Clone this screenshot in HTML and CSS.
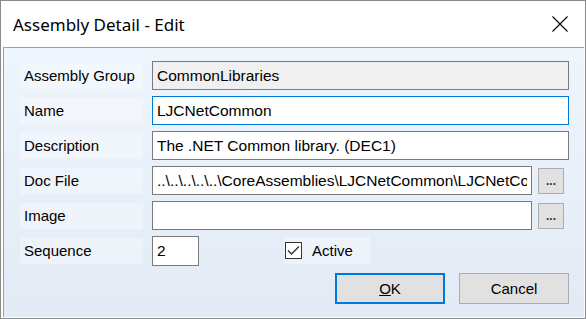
FILE: index.html
```html
<!DOCTYPE html>
<html lang="en">
<head>
  <meta charset="UTF-8" />
  <title>Assembly Detail - Edit</title>
  <link rel="stylesheet" href="styles.css">
</head>
<body>
  <div class="window">
    <div class="titlebar">
      <span class="title">Assembly Detail - Edit</span>
      <svg class="close" width="16" height="16" viewBox="0 0 16 16">
        <path d="M0.5 0.5 L15.5 15.5 M15.5 0.5 L0.5 15.5" stroke="#000" stroke-width="1.1" fill="none"/>
      </svg>
    </div>
    <div class="client">
      <div class="row">
        <label class="caption">Assembly Group</label>
        <input class="field readonly" type="text" value="CommonLibraries" readonly />
      </div>
      <div class="row">
        <label class="caption">Name</label>
        <input class="field focused" type="text" value="LJCNetCommon" />
      </div>
      <div class="row">
        <label class="caption">Description</label>
        <input class="field" type="text" value="The .NET Common library. (DEC1)" />
      </div>
      <div class="row">
        <label class="caption">Doc File</label>
        <input class="field short" type="text" value="..\..\..\..\..\CoreAssemblies\LJCNetCommon\LJCNetCommon.xml" />
        <button class="browse">...</button>
      </div>
      <div class="row">
        <label class="caption">Image</label>
        <input class="field short" type="text" value="" />
        <button class="browse">...</button>
      </div>
      <div class="row">
        <label class="caption">Sequence</label>
        <input class="field seq" type="text" value="2" />
        <label class="check">
          <span class="box">
            <svg width="13" height="11" viewBox="0 0 13 11">
              <path d="M1 5.5 L4.5 9 L12 1.5" stroke="#333" stroke-width="1.4" fill="none"/>
            </svg>
          </span>
          Active
        </label>
      </div>
      <div class="actions">
        <button class="btn default"><u>O</u>K</button>
        <button class="btn">Cancel</button>
      </div>
    </div>
  </div>
</body>
</html>
```

FILE: styles.css
```css
* {
  margin: 0;
  padding: 0;
  box-sizing: border-box;
}

body {
  background: #ffffff;
  font-family: 'Liberation Sans', Arial, sans-serif;
}

.window {
  width: 586px;
  height: 319px;
  border: 1px solid #8a8a8a;
  display: flex;
  flex-direction: column;
  background: #ffffff;
}

.titlebar {
  height: 46px;
  display: flex;
  align-items: center;
  justify-content: space-between;
  padding: 0 17px 0 12px;
  background: #ffffff;
}

.title {
  font-family: 'Noto Sans', 'Open Sans', sans-serif;
  font-size: 17px;
  color: #000;
}

.client {
  flex: 1;
  margin: 0 1px 1px 2px;
  border-top: 1px solid #a0a0a0;
  border-left: 1px solid #a0a0a0;
  background: linear-gradient(#eef5fd, #e2eaf5);
  padding: 13px 15px 0 16px;
}

.row {
  display: flex;
  align-items: center;
  height: 29px;
  margin-bottom: 6px;
}

.caption {
  width: 123px;
  height: 26px;
  margin-right: 9px;
  padding-left: 4px;
  display: flex;
  align-items: center;
  font-size: 15px;
  color: #000;
  background: rgba(255, 255, 255, 0.35);
}

.field {
  height: 29px;
  flex: 1;
  min-width: 0;
  border: 1px solid #7a7a7a;
  background: #ffffff;
  font-family: 'Liberation Sans', Arial, sans-serif;
  font-size: 15.5px;
  color: #000;
  padding: 0 4px;
  outline: none;
}

.field.readonly {
  background: #f0f0f0;
}

.field.focused {
  border-color: #0078d7;
}

.field.short {
  flex: 0 0 380px;
}

.field.seq {
  flex: 0 0 47px;
  width: 47px;
  height: 30px;
}

.browse {
  width: 26px;
  height: 26px;
  margin-left: 6px;
  border: 1px solid #adadad;
  background: #e1e1e1;
  font-family: 'Liberation Sans', Arial, sans-serif;
  font-size: 12px;
  font-weight: bold;
  color: #333;
  line-height: 14px;
}

.check {
  margin-left: 85px;
  width: 86px;
  height: 27px;
  display: flex;
  align-items: center;
  gap: 10px;
  padding-left: 1px;
  font-size: 15px;
  color: #000;
  background: rgba(255, 255, 255, 0.35);
}

.box {
  width: 17px;
  height: 17px;
  border: 1px solid #333;
  background: #fff;
  display: flex;
  align-items: center;
  justify-content: center;
}

.actions {
  display: flex;
  justify-content: flex-end;
  gap: 14px;
  margin-top: 8px;
}

.btn {
  width: 110px;
  height: 31px;
  border: 1px solid #adadad;
  background: #e1e1e1;
  font-family: 'Liberation Sans', Arial, sans-serif;
  font-size: 15px;
  color: #000;
}

.btn.default {
  border: 2px solid #0078d7;
}
```
